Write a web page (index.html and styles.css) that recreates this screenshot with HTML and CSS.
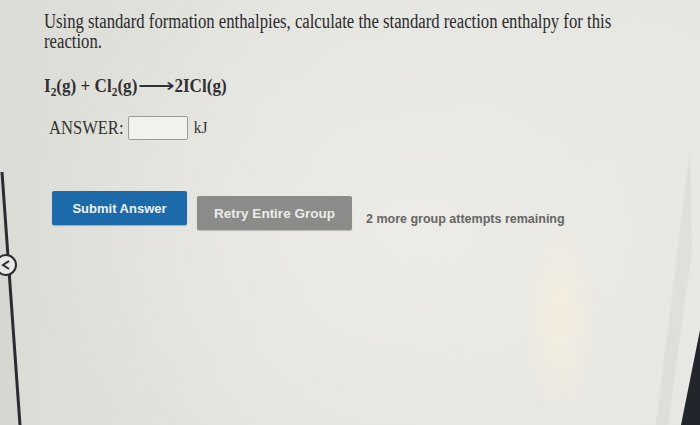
FILE: index.html
```html
<!DOCTYPE html>
<html>
<head>
<meta charset="utf-8">
<link rel="stylesheet" href="styles.css">
</head>
<body>
<div class="photo">
  <div class="page">
    <div class="question">
      <p class="prompt">Using standard formation enthalpies, calculate the standard reaction enthalpy for this<br>reaction.</p>
      <p class="equation">I<sub>2</sub>(g) + Cl<sub>2</sub>(g)<span class="arrow">⟶</span>2ICl(g)</p>
      <div class="answer">
        <span class="label">ANSWER:</span>
        <span class="box"></span>
        <span class="unit">kJ</span>
      </div>
    </div>
    <div class="actions">
      <button class="btn submit">Submit Answer</button>
      <button class="btn retry">Retry Entire Group</button>
      <span class="remaining">2 more group attempts remaining</span>
    </div>
  </div>
  <svg class="bezel" width="700" height="425" viewBox="0 0 700 425">
    <path d="M0 170 L3 175 L20 425 L0 425 Z" fill="#d6d6d2"/>
    <path d="M2 172 L20 425" stroke="#2a2c30" stroke-width="3" fill="none"/>
    <circle cx="6" cy="265" r="10" fill="#e9e9e6" stroke="#2a2c30" stroke-width="2"/>
    <path d="M9 261 L3 265 L9 269" stroke="#2a2c30" stroke-width="2" fill="none"/>
    <path d="M690 150 L692 250 L668 425 L656 425 Z" fill="#d2d2ce" opacity="0.4"/>
    <path d="M700 330 L700 425 L681 425 Z" fill="#23252c"/>
  </svg>
</div>
</body>
</html>
```
FILE: styles.css
```css
html, body {
  margin: 0;
  padding: 0;
}
body {
  width: 700px;
  height: 425px;
  overflow: hidden;
}
.photo {
  position: relative;
  width: 700px;
  height: 425px;
  background:
    radial-gradient(ellipse 40px 100px at 560px 320px, rgba(246,238,222,0.9), rgba(240,236,228,0) 100%),
    radial-gradient(ellipse 400px 300px at 420px 230px, #ecebe7, rgba(236,235,231,0) 100%),
    linear-gradient(90deg, #dcdcd7 0%, #e4e4df 40%, #e6e6e2 100%);
}
.page {
  display: flex;
  flex-direction: column;
  padding: 11px 0 0 44px;
  font-family: "Liberation Serif", "Times New Roman", serif;
  color: #2b2b2c;
}
.question p {
  margin: 0;
}
.prompt {
  font-size: 20px;
  line-height: 20px;
  width: 760px;
  transform: scaleX(0.835);
  transform-origin: left top;
}
.equation {
  margin-top: 25px !important;
  font-size: 18px;
  line-height: 20px;
  font-weight: bold;
  color: #303032;
  transform: scaleX(0.95);
  transform-origin: left top;
  white-space: nowrap;
}
.equation sub {
  font-size: 12px;
  vertical-align: -4px;
  line-height: 0;
}
.arrow {
  font-weight: normal;
  display: inline-block;
  transform: scaleX(1.5);
  margin: 0 6px 0 7px;
}
.answer {
  display: flex;
  align-items: center;
  margin: 20px 0 0 5px;
  font-size: 18px;
  color: #333;
}
.label {
  display: inline-block;
  width: 79px;
  transform: scaleX(0.92);
  transform-origin: left center;
}
.box {
  width: 58px;
  height: 22px;
  border: 1px solid #9a9a98;
  background: #f1f1ee;
  border-radius: 2px;
}
.unit {
  margin-left: 5px;
  font-size: 17px;
  transform: scaleX(0.9);
}
.actions {
  display: flex;
  align-items: flex-start;
  margin: 51px 0 0 8px;
  font-family: "Liberation Sans", Arial, sans-serif;
}
.btn {
  font-family: "Liberation Sans", Arial, sans-serif;
  font-weight: bold;
  border: none;
  border-radius: 2px;
  color: #eef2f6;
  font-size: 13px;
  padding: 0;
}
.submit {
  width: 135px;
  height: 34px;
  background: #1c6aaa;
  box-shadow: 0 1px 1px rgba(0,0,0,0.25);
}
.retry {
  margin: 5px 0 0 10px;
  width: 155px;
  height: 34px;
  background: #8b8b89;
  color: #ececea;
  font-size: 13.5px;
  box-shadow: 0 1px 1px rgba(0,0,0,0.2);
}
.remaining {
  margin: 21px 0 0 14px;
  font-size: 12.5px;
  font-weight: bold;
  color: #666665;
}
.bezel {
  position: absolute;
  left: 0;
  top: 0;
  pointer-events: none;
}
```
